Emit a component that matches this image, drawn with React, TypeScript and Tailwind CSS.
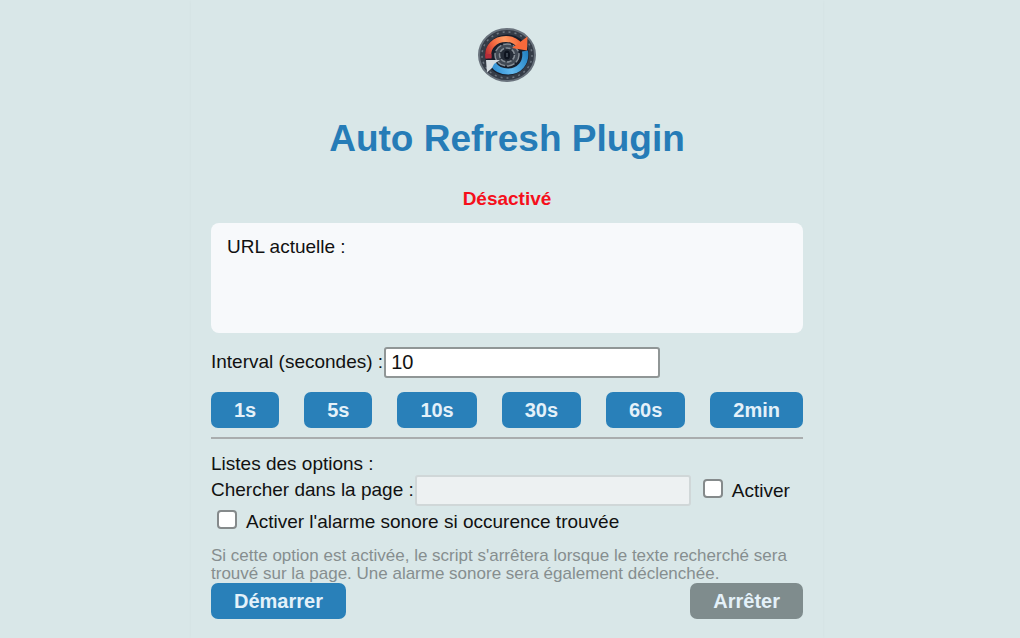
import { useState } from "react";
import type { ReactNode } from "react";

const presets = [
  { label: "1s", seconds: 1 },
  { label: "5s", seconds: 5 },
  { label: "10s", seconds: 10 },
  { label: "30s", seconds: 30 },
  { label: "60s", seconds: 60 },
  { label: "2min", seconds: 120 },
];

function App() {
  const [interval, setRefreshInterval] = useState("10");
  const [searchEnabled, setSearchEnabled] = useState(false);

  return (
    <div className="min-h-screen bg-[#d9e7e8] pr-[6px] font-['Liberation_Sans',Arial,sans-serif] text-[19px] text-[#111]">
      <main className="mx-auto max-w-[632px] px-5 pt-7 pb-5 shadow-[0_0_3px_rgba(0,0,0,0.03)]">
        <Logo />
        <h1 className="mt-[35px] text-center text-[37px] leading-[44px] font-bold text-[#267cb7]">
          Auto Refresh Plugin
        </h1>
        <p className="mt-[26px] text-center leading-6 font-bold text-[#f50f1b]">
          Désactivé
        </p>
        <div className="mt-3 min-h-[110px] rounded-lg bg-[#f7f9fb] px-4 py-3 leading-6">
          URL actuelle :
        </div>

        <div className="mt-[14px] flex items-center gap-px">
          <label htmlFor="interval">Interval (secondes) :</label>
          <input
            id="interval"
            type="text"
            inputMode="numeric"
            value={interval}
            onChange={(e) => setRefreshInterval(e.target.value)}
            className="h-[31px] w-[276px] rounded-[3px] border-2 border-[#909696] bg-white px-[5px] text-[20px] outline-none"
          />
        </div>

        <div className="mt-[14px] flex flex-wrap justify-between gap-2">
          {presets.map((preset) => (
            <Button
              key={preset.label}
              onClick={() => setRefreshInterval(String(preset.seconds))}>
              {preset.label}
            </Button>
          ))}
        </div>

        <hr className="mt-[9px] h-[2px] border-t-2 border-[#a9adae]" />

        <p className="mt-[14px] leading-[22px]">Listes des options :</p>
        <div className="flex items-start">
          <div className="flex items-center gap-px">
            <label htmlFor="search">Chercher dans la page :</label>
            <input
              id="search"
              type="text"
              disabled={!searchEnabled}
              className="h-[31px] w-[276px] rounded-[3px] border-2 border-[#d0d7d8] bg-[#edf1f2] px-[5px] text-[20px] outline-none"
            />
          </div>
          <Checkbox
            id="enable-search"
            checked={searchEnabled}
            onChange={setSearchEnabled}
          />
          <label htmlFor="enable-search" className="ml-[9px] leading-[31px]">
            Activer
          </label>
        </div>

        <AlarmOption />

        <p className="mt-[10px] text-[17px] leading-[18px] text-[#868e8f]">
          Si cette option est activée, le script s'arrêtera lorsque le texte
          recherché sera trouvé sur la page. Une alarme sonore sera également
          déclenchée.
        </p>
        <div className="flex justify-between">
          <Button>Démarrer</Button>
          <Button muted>Arrêter</Button>
        </div>
      </main>
    </div>
  );
}

export default App;

function AlarmOption() {
  const [alarm, setAlarm] = useState(false);

  return (
    <div className="-ml-[6px] flex items-start">
      <Checkbox id="alarm" checked={alarm} onChange={setAlarm} />
      <label htmlFor="alarm" className="ml-[9px] leading-[31px]">
        Activer l'alarme sonore si occurence trouvée
      </label>
    </div>
  );
}

type CheckboxProps = {
  id: string;
  checked: boolean;
  onChange: (checked: boolean) => void;
};

function Checkbox({ id, checked, onChange }: CheckboxProps) {
  return (
    <input
      id={id}
      type="checkbox"
      checked={checked}
      onChange={(e) => onChange(e.target.checked)}
      className="mt-1 ml-3 h-[19px] w-5 shrink-0 appearance-none rounded-[4px] border-2 border-[#858a8b] bg-white checked:bg-[#2980b9]"
    />
  );
}

type ButtonProps = {
  children: ReactNode;
  muted?: boolean;
  onClick?: () => void;
};

function Button({ children, muted, onClick }: ButtonProps) {
  return (
    <button
      type="button"
      onClick={onClick}
      className={`h-9 rounded-[7px] px-[23px] text-[20px] font-bold text-[#e4f1f9] ${
        muted ? "bg-[#7f8c8d]" : "bg-[#2980b9]"
      }`}>
      {children}
    </button>
  );
}

function Logo() {
  return (
    <svg
      viewBox="0 0 58 54"
      className="mx-auto block h-[54px] w-[58px]"
      fill="none"
      aria-hidden="true">
      <defs>
        <linearGradient id="warm" x1="10" y1="30" x2="44" y2="12" gradientUnits="userSpaceOnUse">
          <stop offset="0" stopColor="#b92f35" />
          <stop offset="0.3" stopColor="#f2673f" />
          <stop offset="0.6" stopColor="#ff9b62" />
          <stop offset="1" stopColor="#f45d31" />
        </linearGradient>
        <linearGradient id="cold" x1="14" y1="40" x2="50" y2="26" gradientUnits="userSpaceOnUse">
          <stop offset="0" stopColor="#2f8ed2" />
          <stop offset="0.45" stopColor="#64b9ee" />
          <stop offset="1" stopColor="#2382c2" />
        </linearGradient>
      </defs>
      <ellipse cx="29" cy="27" rx="28" ry="26" fill="#353c47" stroke="#69727c" strokeWidth="2" />
      <ellipse cx="29" cy="27" rx="25" ry="23" stroke="#6d7680" strokeWidth="1.5" strokeDasharray="2 4" />
      <ellipse cx="29" cy="27" rx="22" ry="20.5" fill="#171e2b" />
      <ellipse cx="29" cy="27" rx="12" ry="11" fill="#414954" stroke="#858d95" strokeWidth="1.5" strokeDasharray="8 2" />
      <ellipse cx="29" cy="27" rx="7.5" ry="7" fill="#252c37" stroke="#858d95" strokeWidth="1.5" strokeDasharray="5 1.5" />
      <ellipse cx="29" cy="27" rx="3" ry="4.5" fill="#0d131e" />
      <path d="M29 25v4" stroke="#65707b" />
      <path d="M10.5 30C8.5 19 17 11 28 11c7 0 11 3 14 7" stroke="url(#warm)" strokeWidth="6" />
      <path d="m49.5 8.5-.5 14L34 20z" fill="#f8693a" />
      <path d="M7.5 26h6v4.5h-6z" fill="#b52d3b" />
      <path d="M47 23c2 12-6 20.5-17 20.5-7 0-12-3-15-7.500" stroke="url(#cold)" strokeWidth="6" />
      <path d="M8 32h14l-6 4-2 4-5 4.500z" fill="#d4dce1" />
    </svg>
  );
}
